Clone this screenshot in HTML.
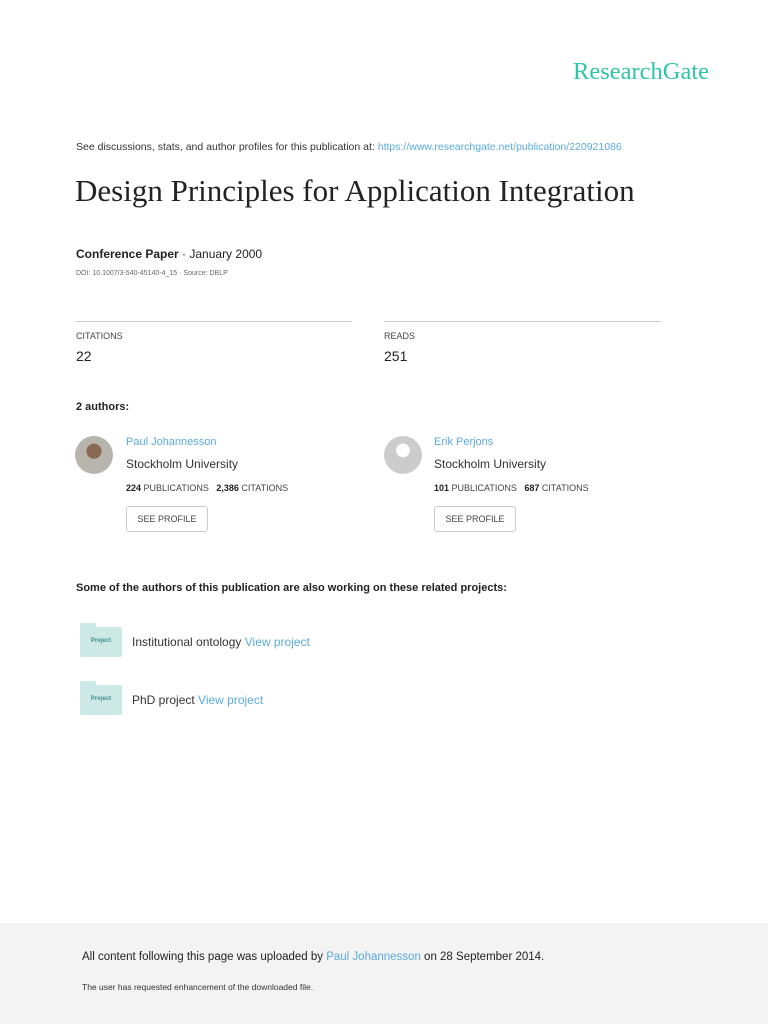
<!DOCTYPE html>
<html><head><meta charset="utf-8"><style>
body{margin:0;width:768px;height:1024px;position:relative;background:#fff;font-family:"Liberation Sans",sans-serif;color:#222;overflow:hidden}
.a{position:absolute;white-space:nowrap}
.blue{color:#5aaadf}
.line{position:absolute;height:1px;background:#ccc}
.av{position:absolute;width:38px;height:38px;border-radius:50%}
.btn{position:absolute;width:80px;height:24px;border:1px solid #ccc;border-radius:3px;font-size:9px;color:#444;text-align:center;line-height:24px}
.folder{position:absolute;width:42px;height:30px;background:#cde9e6;border-radius:2px}
.folder:before{content:"";position:absolute;left:0;top:-4px;width:16px;height:5px;background:#cde9e6;border-radius:2px 2px 0 0}
.folder span{position:absolute;left:0;right:0;top:11px;text-align:center;font-size:6px;font-weight:bold;color:#3b8f86}
</style></head><body>
<div class="a" style="left:573px;top:58px;font-size:24.5px;font-family:'Liberation Serif',serif;color:#2fc5a8">ResearchGate</div>
<div class="a" style="left:76px;top:141px;font-size:10.5px;color:#333">See discussions, stats, and author profiles for this publication at: <span class="blue">https://www.researchgate.net/publication/220921086</span></div>
<div class="a" style="left:75px;top:173px;font-size:31px;font-family:'Liberation Serif',serif;color:#222">Design Principles for Application Integration</div>
<div class="a" style="left:76px;top:247px;font-size:12px"><b>Conference Paper</b> · January 2000</div>
<div class="a" style="left:76px;top:270px;font-size:7px;color:#666">DOI: 10.1007/3-540-45140-4_15 · Source: DBLP</div>
<div class="line" style="left:76px;top:321px;width:276px"></div>
<div class="line" style="left:384px;top:321px;width:277px"></div>
<div class="a" style="left:76px;top:331px;font-size:9px;color:#444">CITATIONS</div>
<div class="a" style="left:384px;top:331px;font-size:9px;color:#444">READS</div>
<div class="a" style="left:76px;top:348px;font-size:14px">22</div>
<div class="a" style="left:384px;top:348px;font-size:14px">251</div>
<div class="a" style="left:76px;top:401px;font-size:11px;font-weight:bold">2 authors:</div>
<div class="av" style="left:75px;top:436px;background:radial-gradient(circle at 50% 40%,#8a6a55 0 25%,#b8b4ae 26% 100%)"></div>
<div class="a blue" style="left:126px;top:436px;font-size:11px">Paul Johannesson</div>
<div class="a" style="left:126px;top:457px;font-size:12px;color:#333">Stockholm University</div>
<div class="a" style="left:126px;top:483px;font-size:9px;color:#444"><b style="color:#222">224</b> PUBLICATIONS &nbsp;&nbsp;<b style="color:#222">2,386</b> CITATIONS</div>
<div class="btn" style="left:126px;top:506px">SEE PROFILE</div>
<div class="av" style="left:384px;top:436px;background:radial-gradient(circle at 50% 38%,#fff 0 22%,#ccc 23% 100%)"></div>
<div class="a blue" style="left:434px;top:436px;font-size:11px">Erik Perjons</div>
<div class="a" style="left:434px;top:457px;font-size:12px;color:#333">Stockholm University</div>
<div class="a" style="left:434px;top:483px;font-size:9px;color:#444"><b style="color:#222">101</b> PUBLICATIONS &nbsp;&nbsp;<b style="color:#222">687</b> CITATIONS</div>
<div class="btn" style="left:434px;top:506px">SEE PROFILE</div>
<div class="a" style="left:76px;top:582px;font-size:11px;font-weight:bold">Some of the authors of this publication are also working on these related projects:</div>
<div class="folder" style="left:80px;top:627px"><span>Project</span></div>
<div class="a" style="left:132px;top:635px;font-size:12px;color:#333">Institutional ontology <span class="blue">View project</span></div>
<div class="folder" style="left:80px;top:685px"><span>Project</span></div>
<div class="a" style="left:132px;top:693px;font-size:12px;color:#333">PhD project <span class="blue">View project</span></div>
<div style="position:absolute;left:0;top:923px;width:768px;height:101px;background:#f3f3f3"></div>
<div class="a" style="left:82px;top:951px;font-size:11.5px;color:#222">All content following this page was uploaded by <span class="blue">Paul Johannesson</span> on 28 September 2014.</div>
<div class="a" style="left:82px;top:982px;font-size:8.5px;color:#333">The user has requested enhancement of the downloaded file.</div>
</body></html>
